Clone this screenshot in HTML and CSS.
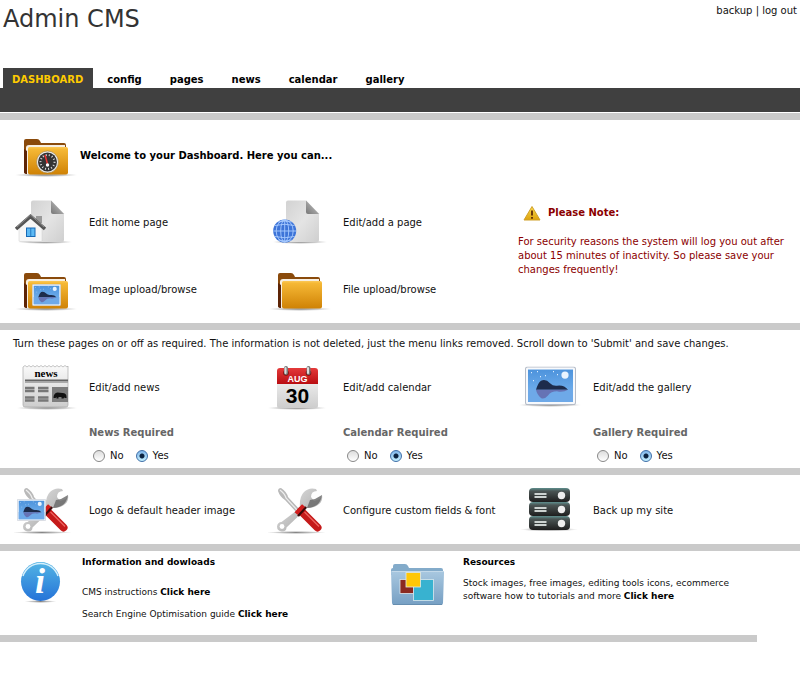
FILE: index.html
```html
<!DOCTYPE html>
<html lang="en">
<head>
  <meta charset="utf-8">
  <title>Admin CMS</title>
  <link rel="stylesheet" href="styles.css">
</head>
<body>

  <!-- shared gradients and icon parts -->
  <svg class="defs" aria-hidden="true">
    <defs>
      <linearGradient id="orange" x1="0" y1="0" x2="0" y2="1">
        <stop offset="0" stop-color="#f9bd3a"/><stop offset="1" stop-color="#cf8205"/>
      </linearGradient>
      <linearGradient id="paper" x1="0" y1="0" x2="1" y2="1">
        <stop offset="0" stop-color="#d2d2d2"/><stop offset="0.5" stop-color="#e4e4e4"/><stop offset="1" stop-color="#cfcfcf"/>
      </linearGradient>
      <linearGradient id="fold" x1="0" y1="1" x2="1" y2="0">
        <stop offset="0" stop-color="#777"/><stop offset="1" stop-color="#ccc"/>
      </linearGradient>
      <linearGradient id="sky" x1="0" y1="0" x2="0" y2="1">
        <stop offset="0" stop-color="#4d93dc"/><stop offset="1" stop-color="#7db9f2"/>
      </linearGradient>
      <linearGradient id="red" x1="0" y1="0" x2="0" y2="1">
        <stop offset="0" stop-color="#e43a3a"/><stop offset="1" stop-color="#b90d12"/>
      </linearGradient>
      <linearGradient id="light" x1="0" y1="0" x2="0" y2="1">
        <stop offset="0" stop-color="#fafafa"/><stop offset="1" stop-color="#cdcdcd"/>
      </linearGradient>
      <linearGradient id="steel" x1="0" y1="0" x2="1" y2="1">
        <stop offset="0" stop-color="#e8e8e8"/><stop offset="1" stop-color="#9c9c9c"/>
      </linearGradient>
      <linearGradient id="dark" x1="0" y1="0" x2="0" y2="1">
        <stop offset="0" stop-color="#5f8f8e"/><stop offset="0.22" stop-color="#4b5554"/><stop offset="1" stop-color="#1e1e1e"/>
      </linearGradient>
      <linearGradient id="blue" x1="0" y1="0" x2="0" y2="1">
        <stop offset="0" stop-color="#52b4e4"/><stop offset="1" stop-color="#2573d8"/>
      </linearGradient>
      <linearGradient id="bluefolder" x1="0" y1="0" x2="0" y2="1">
        <stop offset="0" stop-color="#a9c8e0"/><stop offset="1" stop-color="#769fc3"/>
      </linearGradient>
      <linearGradient id="yellow" x1="0" y1="0" x2="0" y2="1">
        <stop offset="0" stop-color="#fbdc50"/><stop offset="1" stop-color="#dda20c"/>
      </linearGradient>
      <radialGradient id="shade">
        <stop offset="0" stop-color="#666" stop-opacity="0.8"/><stop offset="0.6" stop-color="#999" stop-opacity="0.5"/><stop offset="1" stop-color="#bbb" stop-opacity="0"/>
      </radialGradient>

      <symbol id="folder" viewBox="0 0 64 54">
        <ellipse cx="32" cy="46" rx="32" ry="2" fill="url(#shade)"/>
        <path d="M10 43V12q0-2 2-2h11q2 0 3 2l1 2h23q2 0 2 2v28H12q-2 0-2-1z" fill="#8a4a0b"/>
        <path d="M12 44V19q0-3 3-3h36v3H18q-3 0-3 3v23z" fill="#f7efe2"/>
        <path d="M10 20l3 2v23q-3 0-3-2z" fill="#5d2406"/>
        <rect x="14" y="18" width="40" height="27.500" rx="2" fill="url(#orange)"/>
        <path d="M15 18.800h38" stroke="#fbc95a"/>
      </symbol>

      <symbol id="sheet" viewBox="0 0 64 54">
        <ellipse cx="32" cy="46" rx="28" ry="2" fill="url(#shade)"/>
        <path d="M20 4.500h18l13 13V44q0 2-2 2H20q-2 0-2-2V6.500q0-2 2-2z" fill="url(#paper)"/>
        <path d="M38 4.500l13 13.500H40q-2 0-2-2z" fill="url(#fold)"/>
      </symbol>

      <symbol id="photo" viewBox="0 0 51 38" preserveAspectRatio="none">
        <rect x="0.500" y="0.500" width="50" height="37" rx="2" fill="#f7f9fc" stroke="#b5bcc8"/>
        <rect x="3" y="3" width="45" height="32" fill="url(#sky)"/>
        <path d="M3 22.500h45V35H3z" fill="#6ea9e8"/>
        <path d="M11 23q2-7 5-9 5-2 9 2.500 3 3 7 2.500 7-1 11 4z" fill="#1d2c4c"/>
        <path d="M11 23h32q-5 3-11 1.500-6 0-9 4-4 4.500-7 2.500-4-3-5-8z" fill="#6673b5"/>
        <circle cx="40" cy="8.500" r="3.600" fill="#e9f4ff"/>
        <path d="M6 6h1M12 5h1M20 9h1M28 5h1M8 14h1M15 10h1M32 8h1" stroke="#d9ecff" stroke-width="1.200"/>
      </symbol>

      <symbol id="tools" viewBox="0 0 64 54">
        <ellipse cx="28" cy="49.500" rx="30" ry="1.500" fill="url(#shade)"/>
        <path d="M32 25q-1-11 4-16 5-5 12-3l1 2q-6 0-6 6l3 4 6-2 2-4q1 6-3 9-4 4-12 4L18.500 44.500q0 4-4.500 4-5-.5-5-5 .5-4.500 4.500-4.500z" fill="url(#steel)"/>
        <path d="M42 17l5-1 7-4q-1 6-4 9-5 4-11 4z" fill="#666" opacity="0.800"/>
        <circle cx="14" cy="43.500" r="2.400" fill="#fff"/>
        <path d="M10 8q0-3 3-3 6 4 7 9l13 14-3 3-13-14q-5-3-7-9z" fill="#b9b9b9"/>
        <path d="M12 7q5 4 6 8l12 13" stroke="#eee" stroke-width="1.200" fill="none"/>
        <path d="M33 28L49.500 44.500" stroke="#c51a1a" stroke-width="8" stroke-linecap="round"/>
        <path d="M36.500 29L51 43.500" stroke="#ee6660" stroke-width="1.200"/>
        <path d="M30 33l8-9" stroke="#3d0808" stroke-width="2.500"/>
        <path d="M28 30.500l7.500-8" stroke="#d01d1d" stroke-width="4"/>
      </symbol>
    </defs>
  </svg>

  <header class="header">
    <h1>Admin CMS</h1>
    <div class="user-links"><a href="#">backup</a> | <a href="#">log out</a></div>
  </header>

  <nav class="tabs">
    <a href="#" class="active">DASHBOARD</a>
    <a href="#">config</a>
    <a href="#">pages</a>
    <a href="#">news</a>
    <a href="#">calendar</a>
    <a href="#">gallery</a>
  </nav>
  <div class="nav-bar"></div>

  <main>
    <section class="panel welcome">
      <div class="item intro">
        <svg class="icon" viewBox="0 0 64 54">
          <use href="#folder"/>
          <circle cx="33.500" cy="33" r="11" fill="#eee" stroke="#9c7a35" stroke-width="0.600"/>
          <circle cx="33.500" cy="33" r="9.500" fill="#343434"/>
          <circle cx="33.500" cy="33" r="7" fill="none" stroke="#ddd" stroke-width="2" stroke-dasharray="1 2.100"/>
          <path d="M31 26l2.500 9" stroke="#e33" stroke-width="1.500"/>
          <circle cx="33.500" cy="36" r="1.700" fill="#fff"/>
        </svg>
        <h2>Welcome to your Dashboard. Here you can...</h2>
      </div>

      <a href="#" class="item">
        <svg class="icon" viewBox="0 0 64 54">
          <use href="#sheet" x="-1"/>
          <path d="M22 20h6v7h-6z" fill="#999"/>
          <path d="M5 31L16.500 20 28 31v13.500q0 1-1 1H6q-1 0-1-1z" fill="#f6f6f6" stroke="#ccc" stroke-width="0.500"/>
          <path d="M2 33L16.500 20.500 31 33" fill="none" stroke="#555" stroke-width="3.600"/>
          <path d="M3 31L16.500 19 30 31" fill="none" stroke="#8d8d8d"/>
          <rect x="12.500" y="32" width="8.500" height="8.500" fill="#5cb9f4" stroke="#1769b5"/>
          <path d="M16.750 32v8.500" stroke="#1769b5" stroke-width="0.800"/>
        </svg>
        <span>Edit home page</span>
      </a>
      <a href="#" class="item">
        <svg class="icon" viewBox="0 0 64 54">
          <use href="#sheet"/>
          <circle cx="16.700" cy="35" r="11.500" fill="#3d74d8"/>
          <g fill="none" stroke="#a9ccff" stroke-width="0.900">
            <ellipse cx="16.700" cy="35" rx="4" ry="11"/>
            <ellipse cx="16.700" cy="35" rx="8.500" ry="11"/>
            <path d="M5.500 35h22.500M7 29.500q10-2.500 19.500 0M7 40.500q10 2.500 19.500 0M10 26q7-2 13.500 0M10 44q7 2 13.500 0M16.700 24v22"/>
          </g>
        </svg>
        <span>Edit/add a page</span>
      </a>
      <a href="#" class="item">
        <svg class="icon" viewBox="0 0 64 54">
          <use href="#folder"/>
          <use href="#photo" x="18" y="21" width="29" height="22"/>
        </svg>
        <span>Image upload/browse</span>
      </a>
      <a href="#" class="item">
        <svg class="icon" viewBox="0 0 64 54"><use href="#folder"/></svg>
        <span>File upload/browse</span>
      </a>

      <div class="notice">
        <h3>
          <svg class="warning" viewBox="0 0 18 16">
            <path d="M9 1.500L17 15H1z" fill="url(#yellow)" stroke="#d0a029" stroke-linejoin="round"/>
            <path d="M9 5.500v5M9 12v1.800" stroke="#5b2a0b" stroke-width="1.800"/>
          </svg>
          Please Note:
        </h3>
        <p>For security reasons the system will log you out after about 15 minutes of inactivity. So please save your changes frequently!</p>
      </div>
    </section>

    <section class="panel">
      <p class="hint">Turn these pages on or off as required. The information is not deleted, just the menu links removed. Scroll down to 'Submit' and save changes.</p>
      <form class="columns">
        <div>
          <a href="#" class="item">
            <svg class="icon" viewBox="0 0 64 54">
              <ellipse cx="33" cy="48" rx="31" ry="2" fill="url(#shade)"/>
              <path d="M9 7l2-1.500 2 1.500 2-1.500 2 1.500 2-1.500 2 1.500 2-1.500 2 1.500 2-1.500 2 1.500 2-1.500 2 1.500 2-1.500 2 1.500 2-1.500 2 1.500 2-1.500 2 1.500 2-1.500 2 1.500 2-1.500 2 1.500 1-1v39q0 2-2 2H11q-2 0-2-2z" fill="url(#light)" stroke="#aaa" stroke-width="0.700"/>
              <text x="32" y="17" class="masthead">news</text>
              <path d="M11 20.500h43" stroke="#666" stroke-width="1.800"/>
              <path d="M11 22.500h43" stroke="#aaa"/>
              <path d="M11 28h9.500M24 28h10.500M11 31h9.500M24 31h10.500M11 37.500h9.500M24 37.500h10.500M11 40.500h9.500M24 40.500h10.500" stroke="#777" stroke-width="2.400"/>
              <rect x="38" y="27" width="16" height="15" fill="#7d7d7d"/>
              <path d="M39.500 38q0-5 4-5.500l5 .5q4 0 4 4v1h-2v-1l-1 1.500h-2V37h-3v1.500h-2V37l-1 1z" fill="#111"/>
            </svg>
            <span>Edit/add news</span>
          </a>
          <fieldset>
            <legend>News Required</legend>
            <div class="options">
              <input type="radio" name="news" id="news-no"><label for="news-no">No</label>
              <input type="radio" name="news" id="news-yes" checked><label for="news-yes">Yes</label>
            </div>
          </fieldset>
        </div>
        <div>
          <a href="#" class="item">
            <svg class="icon" viewBox="0 0 64 54">
              <ellipse cx="29" cy="48" rx="30" ry="2" fill="url(#shade)"/>
              <rect x="9" y="9" width="41" height="39" rx="2" fill="url(#light)"/>
              <path d="M9 24V11q0-3 3-3h35q3 0 3 3v13z" fill="url(#red)"/>
              <g fill="#7a1010"><circle cx="18" cy="13" r="2.800"/><circle cx="40.500" cy="13" r="2.800"/></g>
              <path d="M18 13V8M40.500 13V8" stroke="#777" stroke-width="4" stroke-linecap="round"/>
              <path d="M17.500 13V8M40 13V8" stroke="#ddd" stroke-width="2" stroke-linecap="round"/>
              <text x="29.500" y="22" class="month">AUG</text>
              <text x="29.500" y="43" class="day">30</text>
            </svg>
            <span>Edit/add calendar</span>
          </a>
          <fieldset>
            <legend>Calendar Required</legend>
            <div class="options">
              <input type="radio" name="calendar" id="calendar-no"><label for="calendar-no">No</label>
              <input type="radio" name="calendar" id="calendar-yes" checked><label for="calendar-yes">Yes</label>
            </div>
          </fieldset>
        </div>
        <div>
          <a href="#" class="item">
            <svg class="icon" viewBox="0 0 64 54">
              <ellipse cx="32" cy="45" rx="32" ry="2" fill="url(#shade)"/>
              <use href="#photo" x="7" y="6.500" width="51" height="38.500"/>
            </svg>
            <span>Edit/add the gallery</span>
          </a>
          <fieldset>
            <legend>Gallery Required</legend>
            <div class="options">
              <input type="radio" name="gallery" id="gallery-no"><label for="gallery-no">No</label>
              <input type="radio" name="gallery" id="gallery-yes" checked><label for="gallery-yes">Yes</label>
            </div>
          </fieldset>
        </div>
      </form>
    </section>

    <section class="panel settings">
      <div class="columns">
        <a href="#" class="item">
          <svg class="icon" viewBox="0 0 64 54">
            <use href="#tools"/>
            <use href="#photo" x="3" y="16" width="29" height="22"/>
          </svg>
          <span>Logo &amp; default header image</span>
        </a>
        <a href="#" class="item">
          <svg class="icon" viewBox="0 0 64 54"><use href="#tools"/></svg>
          <span>Configure custom fields &amp; font</span>
        </a>
        <a href="#" class="item">
          <svg class="icon" viewBox="0 0 64 54">
            <ellipse cx="31" cy="46.500" rx="29" ry="2" fill="url(#shade)"/>
            <g fill="url(#dark)">
              <rect x="11" y="5" width="41" height="14" rx="4"/>
              <rect x="11" y="19" width="41" height="14" rx="4"/>
              <rect x="11" y="33" width="41" height="14" rx="4"/>
            </g>
            <path d="M16.500 11h12M16.500 14h12M16.500 25h12M16.500 28h12M16.500 39h12M16.500 42h12" stroke="#ccd2d0" stroke-width="1.800"/>
            <g fill="#eee"><circle cx="43.500" cy="12.500" r="3.700"/><circle cx="43.500" cy="26.500" r="3.700"/><circle cx="43.500" cy="40.500" r="3.700"/></g>
          </svg>
          <span>Back up my site</span>
        </a>
      </div>
    </section>
  </main>

  <footer class="footer">
    <div class="downloads">
      <svg class="icon" viewBox="0 0 64 54">
        <ellipse cx="26.500" cy="46.500" rx="16" ry="1.500" fill="url(#shade)"/>
        <circle cx="26.500" cy="26.500" r="19.500" fill="url(#blue)"/>
        <path d="M9 21a18.500 18.500 0 0 1 35 0" fill="none" stroke="#d4effb" stroke-width="1.500"/>
        <text x="26" y="38" class="info">i</text>
      </svg>
      <div>
        <h3>Information and dowloads</h3>
        <p>CMS instructions <a href="#">Click here</a></p>
        <p>Search Engine Optimisation guide <a href="#">Click here</a></p>
      </div>
    </div>
    <div class="resources">
      <svg class="icon" viewBox="0 0 64 54">
        <path d="M8 13V11q0-2 2-2h10q2 0 3 2l1 2h32q2 0 2 2v5H6v-5q0-2 2-2z" fill="#83abca"/>
        <path d="M6 16h53v2l-1 30q0 2-2 2H9q-2 0-2-2z" fill="url(#bluefolder)"/>
        <path d="M7 16.500h52" stroke="#c3d9ea"/>
        <path d="M8 49.500h49" stroke="#668eb0"/>
        <g stroke="#dce8ee" stroke-width="0.800">
          <rect x="15" y="24.500" width="14" height="14" fill="#8b2a20"/>
          <rect x="28.500" y="24.500" width="20" height="21" fill="#38b2d0"/>
          <rect x="21" y="17.500" width="14.500" height="14.500" fill="#ffc708"/>
        </g>
      </svg>
      <div>
        <h3>Resources</h3>
        <p>Stock images, free images, editing tools icons, ecommerce software how to tutorials and more <a href="#">Click here</a></p>
      </div>
    </div>
  </footer>

</body>
</html>
```
FILE: styles.css
```css
body {
  margin: 0;
  font-family: Verdana, "DejaVu Sans", sans-serif;
  font-size: 10px;
  line-height: 13px;
  color: #111;
  background-color: #fff;
}

h1, h2, h3, p {
  margin: 0;
}

h2, h3 {
  font-size: 10px;
  color: #000;
}

a {
  color: inherit;
  text-decoration: none;
}

.defs {
  position: absolute;
  width: 0;
  height: 0;
}

/* header and tabs */
.header {
  display: flex;
  justify-content: space-between;
  align-items: flex-start;
  min-height: 68px;
  padding: 0 3px;
  box-sizing: border-box;
}

h1 {
  padding-top: 4px;
  font-size: 24px;
  line-height: 30px;
  font-weight: normal;
  color: #333;
}

.user-links {
  padding-top: 4px;
}

.tabs {
  display: flex;
  padding-left: 3px;
  font-weight: bold;
  line-height: 16px;
  color: #000;
}

.tabs a {
  padding: 4px 14px 0;
}

.tabs .active {
  padding: 4px 10px 0 9px;
  background-color: #404040;
  color: #fc0;
}

.nav-bar {
  height: 24px;
  margin-bottom: 1px;
  background-color: #404040;
}

/* panels */
.panel {
  border-top: 7px solid #cacaca;
}

.welcome,
.columns {
  display: grid;
  grid-template-columns: 254fr 250fr 282fr;
  padding-left: 14px;
}

.welcome {
  grid-auto-rows: minmax(67px, auto);
  padding-top: 2px;
}

.item {
  display: flex;
  align-items: center;
  gap: 11px;
}

.intro {
  grid-column: 1 / -1;
  gap: 2px;
}

.icon {
  flex: none;
  width: 64px;
  height: 54px;
}

.notice {
  grid-column: 3;
  grid-row: 2 / 4;
  padding: 16px 14px 0 0;
  line-height: 14px;
  color: #8b0000;
}

.notice h3 {
  display: flex;
  align-items: center;
  gap: 7px;
  margin-bottom: 14px;
  padding-left: 5px;
  color: #8b0000;
}

.warning {
  width: 18px;
  height: 16px;
}

.hint {
  padding: 7px 13px 10px;
}

fieldset {
  margin: 12px 0 0 75px;
  padding: 0;
  border: 0;
}

legend {
  padding: 0;
  font-weight: bold;
  color: #666;
}

.options {
  display: flex;
  align-items: center;
  padding: 10px 0 6px 4px;
}

.options label {
  margin: 0 12px 0 5px;
}

input[type="radio"] {
  appearance: none;
  width: 12px;
  height: 12px;
  margin: 0;
  border: 1px solid #888;
  border-radius: 50%;
  background: linear-gradient(#ddd, #fff);
}

input[type="radio"]:checked {
  border-color: #3f6fa8;
  background: radial-gradient(circle, #0c2340 0 2px, transparent 3px), linear-gradient(#7fb5ea, #c5f0ff);
}

.settings {
  padding: 8px 0 7px;
  border-bottom: 7px solid #cacaca;
}

.footer {
  display: grid;
  grid-template-columns: 371fr 372fr;
  max-width: 743px;
  padding: 4px 0 14px 14px;
  border-bottom: 7px solid #cacaca;
  font-size: 9px;
}

.downloads,
.resources {
  display: flex;
  gap: 4px;
}

.resources {
  gap: 14px;
}

.footer h3 {
  margin: 1px 0 8px;
  font-size: 9px;
}

.footer p a {
  font-weight: bold;
  color: #000;
}

.downloads p {
  margin-top: 9px;
}

.downloads h3 {
  margin-bottom: 17px;
}

/* lettering inside icons */
.masthead {
  font: bold 11px "Liberation Serif", serif;
  text-anchor: middle;
}

.month {
  font: bold 9px "Liberation Sans", sans-serif;
  fill: #fff;
  text-anchor: middle;
}

.day {
  font: bold 21px "Liberation Sans", sans-serif;
  text-anchor: middle;
}

.info {
  font: italic bold 36px "Liberation Serif", serif;
  fill: #fff;
  text-anchor: middle;
}
```
